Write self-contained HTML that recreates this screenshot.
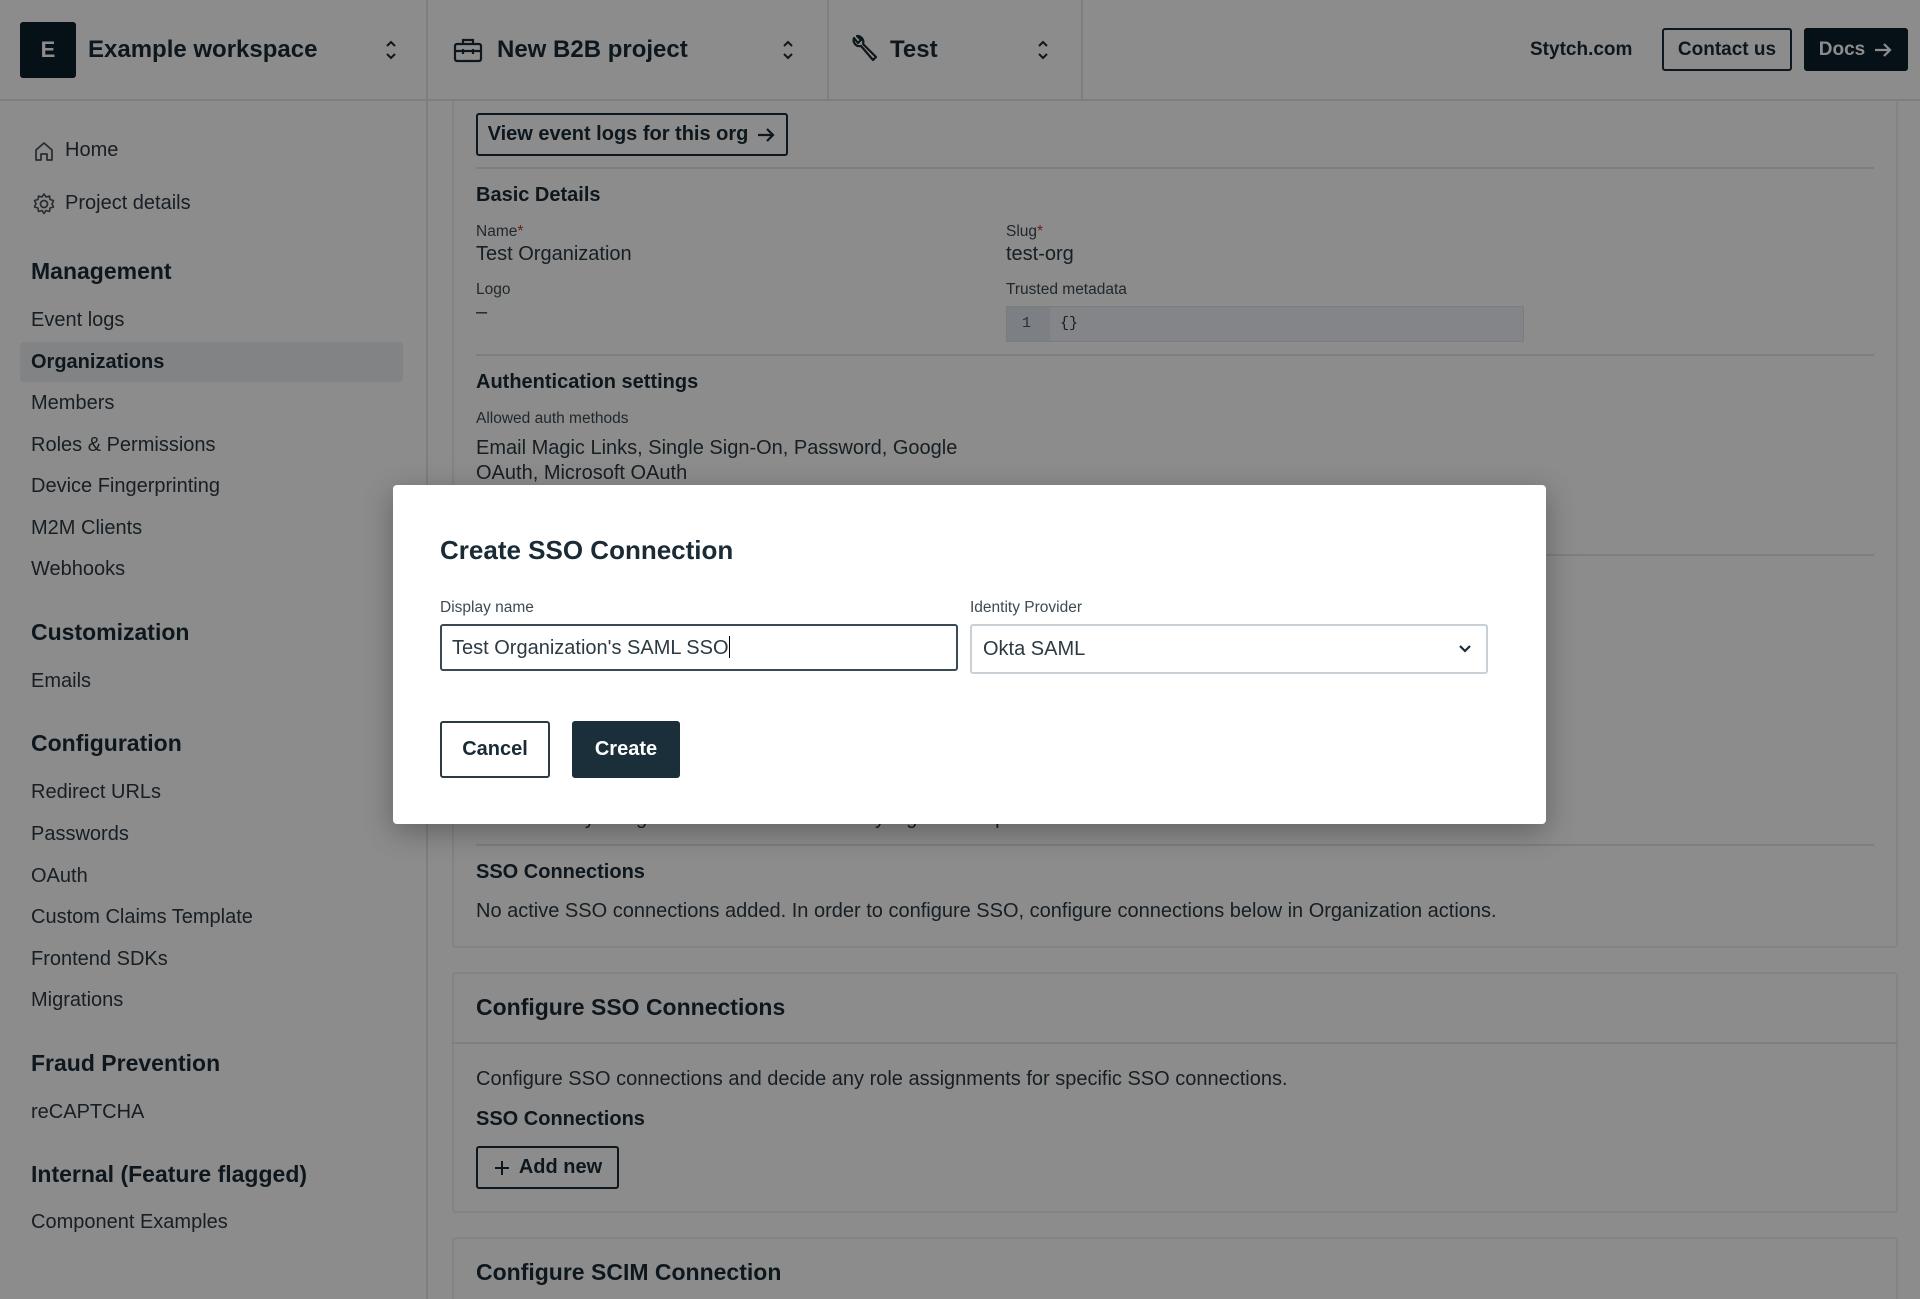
<!DOCTYPE html>
<html><head><meta charset="utf-8">
<style>
*{box-sizing:border-box;margin:0;padding:0}
html,body{width:1920px;height:1299px;overflow:hidden}
body{position:relative;background:#fff;font-family:"Liberation Sans",sans-serif;color:#1a2b35}
.a{position:absolute;white-space:nowrap}
.nav{font-size:20px;color:#2c3a42;line-height:24px}
.h{font-size:23px;font-weight:bold;line-height:28px;color:#1a2b35}
.lbl{font-size:15.5px;color:#3c4a52;line-height:20px}
.val{font-size:20px;color:#2c3a42;line-height:24px}
.sh{font-size:20px;font-weight:bold;line-height:24px}
.line{position:absolute;height:2px;background:#e2e5e7}
.card{position:absolute;border:2px solid #eceef0;border-radius:4px;background:#fff}
.btn{position:absolute;border:2px solid #1a2b35;border-radius:3px;font-size:20px;font-weight:bold;display:flex;align-items:center;justify-content:center;gap:8px}
.overlay{position:absolute;left:0;top:0;width:1920px;height:1299px;background:rgba(0,0,0,0.45)}
</style></head><body>
<!-- main -->
<div class="card" style="left:452px;top:90px;width:1446px;height:858px;border-top:none;border-radius:0 0 4px 4px"></div>
<div class="btn" style="left:476px;top:113px;width:312px;height:43px">View event logs for this org <svg width="20" height="18" viewBox="0 0 20 18"><path d="M2 9h15M11 3l6 6-6 6" fill="none" stroke="#1a2b35" stroke-width="2.2"/></svg></div>
<div class="line" style="left:476px;top:167px;width:1398px"></div>
<div class="a sh" style="left:476px;top:183px">Basic Details</div>
<div class="a lbl" style="left:476px;top:222px">Name<span style="color:#c0392b">*</span></div>
<div class="a val" style="left:476px;top:242px">Test Organization</div>
<div class="a lbl" style="left:1006px;top:222px">Slug<span style="color:#c0392b">*</span></div>
<div class="a val" style="left:1006px;top:242px">test-org</div>
<div class="a lbl" style="left:476px;top:280px">Logo</div>
<div class="a val" style="left:476px;top:300px">–</div>
<div class="a lbl" style="left:1006px;top:280px">Trusted metadata</div>
<div class="a" style="left:1006px;top:306px;width:518px;height:36px;border:1px solid #dfe3e6;background:#eef3f8"></div>
<div class="a" style="left:1007px;top:307px;width:43px;height:34px;background:#e2e8ee"></div>
<div class="a" style="left:1022px;top:315px;font-family:'Liberation Mono',monospace;font-size:15px;color:#555">1</div>
<div class="a" style="left:1060px;top:315px;font-family:'Liberation Mono',monospace;font-size:15px;color:#333">{}</div>
<div class="line" style="left:476px;top:354px;width:1398px"></div>
<div class="a sh" style="left:476px;top:370px">Authentication settings</div>
<div class="a lbl" style="left:476px;top:409px">Allowed auth methods</div>
<div class="a val" style="left:476px;top:436px">Email Magic Links, Single Sign-On, Password, Google</div>
<div class="a val" style="left:476px;top:461px">OAuth, Microsoft OAuth</div>
<div class="line" style="left:476px;top:554px;width:1398px"></div>
<div class="a val" style="left:476px;top:806px">Automatically assign Roles to Members if they log in with specific email domains.</div>
<div class="line" style="left:476px;top:844px;width:1398px"></div>
<div class="a sh" style="left:476px;top:860px">SSO Connections</div>
<div class="a val" style="left:476px;top:899px">No active SSO connections added. In order to configure SSO, configure connections below in Organization actions.</div>
<div class="card" style="left:452px;top:972px;width:1446px;height:241px"></div>
<div class="a" style="left:476px;top:993px;font-size:23px;font-weight:bold;line-height:28px">Configure SSO Connections</div>
<div class="line" style="left:452px;top:1042px;width:1446px"></div>
<div class="a val" style="left:476px;top:1067px">Configure SSO connections and decide any role assignments for specific SSO connections.</div>
<div class="a sh" style="left:476px;top:1107px">SSO Connections</div>
<div class="btn" style="left:476px;top:1146px;width:143px;height:43px"><svg width="18" height="18" viewBox="0 0 18 18"><path d="M9 2v14M2 9h14" stroke="#1a2b35" stroke-width="2"/></svg> Add new</div>
<div class="card" style="left:452px;top:1237px;width:1446px;height:62px;border-bottom:none;border-radius:4px 4px 0 0"></div>
<div class="a" style="left:476px;top:1258px;font-size:23px;font-weight:bold;line-height:28px">Configure SCIM Connection</div>
<!-- header -->
<div class="a" style="left:0;top:0;width:1920px;height:100px;background:#fff"></div>
<div class="a" style="left:0;top:99px;width:1920px;height:2px;background:#e2e5e7"></div>
<div class="a" style="left:426px;top:0;width:2px;height:1299px;background:#e2e5e7"></div>
<div class="a" style="left:827px;top:0;width:2px;height:100px;background:#e2e5e7"></div>
<div class="a" style="left:1081px;top:0;width:2px;height:100px;background:#e2e5e7"></div>
<div class="a" style="left:20px;top:22px;width:56px;height:56px;background:#0a1f2b;border-radius:3px;color:#fff;font-size:22px;font-weight:bold;display:flex;align-items:center;justify-content:center">E</div>
<div class="a" style="left:88px;top:36px;font-size:24px;font-weight:bold;line-height:28px">Example workspace</div>
<svg class="a" style="left:383px;top:38px" width="16" height="24" viewBox="0 0 16 24"><path d="M4 8l4-4 4 4M4 16l4 4 4-4" fill="none" stroke="#1a2b35" stroke-width="2"/></svg>
<svg class="a" style="left:453px;top:37px" width="30" height="26" viewBox="0 0 30 26"><rect x="2" y="7" width="26" height="17" rx="2" fill="none" stroke="#1a2b35" stroke-width="2.2"/><path d="M10 7V3h10v4M2 14h26M10 12v5M20 12v5" fill="none" stroke="#1a2b35" stroke-width="2.2"/></svg>
<div class="a" style="left:497px;top:36px;font-size:24px;font-weight:bold;line-height:28px">New B2B project</div>
<svg class="a" style="left:780px;top:38px" width="16" height="24" viewBox="0 0 16 24"><path d="M4 8l4-4 4 4M4 16l4 4 4-4" fill="none" stroke="#1a2b35" stroke-width="2"/></svg>
<svg class="a" style="left:850px;top:34px" width="28" height="30" viewBox="0 0 28 30"><path d="M4 4a6 6 0 0 0 7 8l12 14 3-3-13-13a6 6 0 0 0-6-8l4 4-3 3z" fill="none" stroke="#1a2b35" stroke-width="2.2" stroke-linejoin="round"/></svg>
<div class="a" style="left:890px;top:36px;font-size:24px;font-weight:bold;line-height:28px">Test</div>
<svg class="a" style="left:1035px;top:38px" width="16" height="24" viewBox="0 0 16 24"><path d="M4 8l4-4 4 4M4 16l4 4 4-4" fill="none" stroke="#1a2b35" stroke-width="2"/></svg>
<div class="a" style="left:1530px;top:38px;font-size:19px;font-weight:bold;line-height:24px">Stytch.com</div>
<div class="btn" style="left:1662px;top:28px;width:130px;height:43px;font-size:19px">Contact us</div>
<div class="btn" style="left:1804px;top:28px;width:104px;height:43px;background:#0a1f2b;color:#fff;border-color:#0a1f2b;font-size:19px">Docs <svg width="20" height="18" viewBox="0 0 20 18"><path d="M2 9h15M11 3l6 6-6 6" fill="none" stroke="#fff" stroke-width="2.2"/></svg></div>
<!-- sidebar -->
<svg class="a" style="left:33px;top:140px" width="22" height="22" viewBox="0 0 22 22"><path d="M3 10L11 3l8 7v10h-5v-6H8v6H3z" fill="none" stroke="#4a555c" stroke-width="1.8" stroke-linejoin="round"/></svg>
<div class="a nav" style="left:65px;top:138px">Home</div>
<svg class="a" style="left:32px;top:192px" width="24" height="24" viewBox="0 0 24 24"><circle cx="12" cy="12" r="3.5" fill="none" stroke="#4a555c" stroke-width="1.8"/><path d="M12 2l2 3 3.5-1 .5 3.5 3.5 1-1.5 3.5 1.5 3-3.5 1-.5 3.5-3.5-1-2 3-2-3-3.5 1-.5-3.5-3.5-1 1.5-3.5-1.5-3 3.5-1 .5-3.5 3.5 1z" fill="none" stroke="#4a555c" stroke-width="1.6" stroke-linejoin="round"/></svg>
<div class="a nav" style="left:65px;top:191px">Project details</div>
<div class="a h" style="left:31px;top:257px">Management</div>
<div class="a nav" style="left:31px;top:308px">Event logs</div>
<div class="a" style="left:20px;top:342px;width:383px;height:40px;background:#eceef0;border-radius:4px"></div>
<div class="a nav" style="left:31px;top:350px;font-weight:bold;color:#1a2b35">Organizations</div>
<div class="a nav" style="left:31px;top:391px">Members</div>
<div class="a nav" style="left:31px;top:433px">Roles &amp; Permissions</div>
<div class="a nav" style="left:31px;top:474px">Device Fingerprinting</div>
<div class="a nav" style="left:31px;top:516px">M2M Clients</div>
<div class="a nav" style="left:31px;top:557px">Webhooks</div>
<div class="a h" style="left:31px;top:618px">Customization</div>
<div class="a nav" style="left:31px;top:669px">Emails</div>
<div class="a h" style="left:31px;top:729px">Configuration</div>
<div class="a nav" style="left:31px;top:780px">Redirect URLs</div>
<div class="a nav" style="left:31px;top:822px">Passwords</div>
<div class="a nav" style="left:31px;top:864px">OAuth</div>
<div class="a nav" style="left:31px;top:905px">Custom Claims Template</div>
<div class="a nav" style="left:31px;top:947px">Frontend SDKs</div>
<div class="a nav" style="left:31px;top:988px">Migrations</div>
<div class="a h" style="left:31px;top:1049px">Fraud Prevention</div>
<div class="a nav" style="left:31px;top:1100px">reCAPTCHA</div>
<div class="a h" style="left:31px;top:1160px">Internal (Feature flagged)</div>
<div class="a nav" style="left:31px;top:1210px">Component Examples</div>
<div class="overlay"></div>
<!-- modal -->
<div class="a" style="left:393px;top:485px;width:1153px;height:339px;background:#fff;border-radius:4px;box-shadow:0 8px 30px rgba(0,0,0,0.3)"></div>
<div class="a" style="left:440px;top:534px;font-size:26px;font-weight:bold;line-height:32px;color:#1a2b35">Create SSO Connection</div>
<div class="a lbl" style="left:440px;top:598px">Display name</div>
<div class="a lbl" style="left:970px;top:598px">Identity Provider</div>
<div class="a" style="left:440px;top:624px;width:518px;height:47px;border:2px solid #3a4a54;border-radius:3px"></div>
<div class="a val" style="left:452px;top:636px">Test Organization's SAML SSO<span style="display:inline-block;width:1px;height:22px;background:#000;vertical-align:-4px"></span></div>
<div class="a" style="left:970px;top:624px;width:518px;height:50px;border:2px solid #c9d0d6;border-radius:3px"></div>
<div class="a val" style="left:983px;top:637px">Okta SAML</div>
<svg class="a" style="left:1457px;top:643px" width="16" height="12" viewBox="0 0 16 12"><path d="M3 3l5 5 5-5" fill="none" stroke="#1a2b35" stroke-width="2.2"/></svg>
<div class="btn" style="left:440px;top:721px;width:110px;height:57px;border-color:#2c3a42">Cancel</div>
<div class="btn" style="left:572px;top:721px;width:108px;height:57px;background:#1b2f3b;border-color:#1b2f3b;color:#fff">Create</div>
</body></html>
